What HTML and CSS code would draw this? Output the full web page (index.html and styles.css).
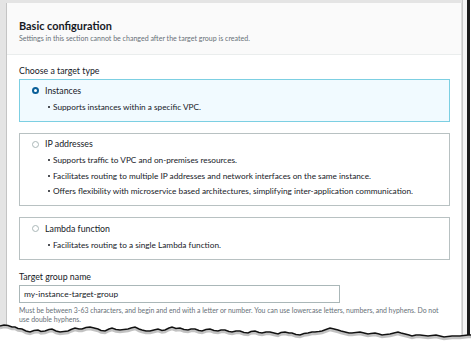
FILE: index.html
```html
<!DOCTYPE html>
<html>
<head>
<meta charset="utf-8">
<link rel="stylesheet" href="styles.css">
</head>
<body>
<div class="shot">
  <div class="card">
    <div class="header">
      <h2 class="title">Basic configuration</h2>
      <p class="subtitle">Settings in this section cannot be changed after the target group is created.</p>
    </div>
    <div class="body">
      <div class="field-label">Choose a target type</div>
      <div class="tiles">
        <div class="tile selected">
          <div class="tile-head"><span class="radio checked"></span><span>Instances</span></div>
          <ul class="bullets">
            <li>Supports instances within a specific VPC.</li>
          </ul>
        </div>
        <div class="tile">
          <div class="tile-head"><span class="radio"></span><span>IP addresses</span></div>
          <ul class="bullets">
            <li>Supports traffic to VPC and on-premises resources.</li>
            <li>Facilitates routing to multiple IP addresses and network interfaces on the same instance.</li>
            <li>Offers flexibility with microservice based architectures, simplifying inter-application communication.</li>
          </ul>
        </div>
        <div class="tile">
          <div class="tile-head"><span class="radio"></span><span>Lambda function</span></div>
          <ul class="bullets">
            <li>Facilitates routing to a single Lambda function.</li>
          </ul>
        </div>
      </div>
      <div class="field-label name-label">Target group name</div>
      <div class="input">my-instance-target-group</div>
      <p class="help">Must be between 3-63 characters, and begin and end with a letter or number. You can use lowercase letters, numbers, and hyphens. Do not use double hyphens.</p>
    </div>
  </div>
</div>
<svg class="tear" width="474" height="24" viewBox="0 0 474 24" xmlns="http://www.w3.org/2000/svg">
  <path d="M0 6 L4 5 L8 5.5 L12 7 L15 7 L18 8.5 L22 9 L26 11 L30 12 L34 10.5 L38 10 L41 11.5 L45 11 L49 9.5 L52 9 L56 11 L60 12 L64 11.5 L68 11 L71 9.5 L75 8 L79 9 L82 9 L86 7.5 L90 7 L94 8 L98 9 L101 10.5 L105 11 L109 9 L112 8 L116 9.5 L120 10 L124 9.5 L128 9 L131 8 L135 7 L139 9 L142 10 L146 11 L150 11 L154 10 L158 9 L162 10.5 L165 10 L169 8 L172 7 L176 8.5 L180 8 L184 9.5 L188 10 L191 9 L195 9 L199 10.5 L202 11 L206 9.5 L210 9 L214 10.5 L218 11 L221 10 L225 10 L229 11.5 L232 12 L236 11 L240 11 L244 12.5 L248 13 L251 11.5 L255 11 L259 12.5 L262 13 L266 12 L270 12 L274 13 L278 14 L281 12.5 L285 12 L289 13 L292 13 L296 14.5 L300 15 L304 13.5 L308 13 L312 12 L315 12 L319 11.5 L322 11 L326 9.5 L330 8 L334 9 L338 10 L341 11 L345 12 L349 13 L352 13 L356 12.5 L360 12 L364 13 L368 14 L371 13.5 L375 13 L379 14 L382 15 L386 14.5 L390 14 L394 13 L398 12 L401 13 L405 14 L409 15 L412 16 L416 15 L420 15 L424 15.5 L428 16 L432 15.5 L436 15 L440 16 L444 17 L448 16.5 L452 16 L456 16 L460 16 L464 15.5 L468 15 L471 15 L474 15 L474 24 L0 24 Z" fill="#fff"/>
  <path d="M0 8 L4 7 L8 7.5 L12 9 L15 9 L18 10.5 L22 11 L26 13 L30 14 L34 12.5 L38 12 L41 13.5 L45 13 L49 11.5 L52 11 L56 13 L60 14 L64 13.5 L68 13 L71 11.5 L75 10 L79 11 L82 11 L86 9.5 L90 9 L94 10 L98 11 L101 12.5 L105 13 L109 11 L112 10 L116 11.5 L120 12 L124 11.5 L128 11 L131 10 L135 9 L139 11 L142 12 L146 13 L150 13 L154 12 L158 11 L162 12.5 L165 12 L169 10 L172 9 L176 10.5 L180 10 L184 11.5 L188 12 L191 11 L195 11 L199 12.5 L202 13 L206 11.5 L210 11 L214 12.5 L218 13 L221 12 L225 12 L229 13.5 L232 14 L236 13 L240 13 L244 14.5 L248 15 L251 13.5 L255 13 L259 14.5 L262 15 L266 14 L270 14 L274 15 L278 16 L281 14.5 L285 14 L289 15 L292 15 L296 16.5 L300 17 L304 15.5 L308 15 L312 14 L315 14 L319 13.5 L322 13 L326 11.5 L330 10 L334 11 L338 12 L341 13 L345 14 L349 15 L352 15 L356 14.5 L360 14 L364 15 L368 16 L371 15.5 L375 15 L379 16 L382 17 L386 16.5 L390 16 L394 15 L398 14 L401 15 L405 16 L409 17 L412 18 L416 17 L420 17 L424 17.5 L428 18 L432 17.5 L436 17 L440 18 L444 19 L448 18.5 L452 18 L456 18 L460 18 L464 17.5 L468 17 L471 17" fill="none" stroke="#9a9a9a" stroke-width="2.5" stroke-opacity="0.6"/>
  <path d="M0 6 L4 5 L8 5.5 L12 7 L15 7 L18 8.5 L22 9 L26 11 L30 12 L34 10.5 L38 10 L41 11.5 L45 11 L49 9.5 L52 9 L56 11 L60 12 L64 11.5 L68 11 L71 9.5 L75 8 L79 9 L82 9 L86 7.5 L90 7 L94 8 L98 9 L101 10.5 L105 11 L109 9 L112 8 L116 9.5 L120 10 L124 9.5 L128 9 L131 8 L135 7 L139 9 L142 10 L146 11 L150 11 L154 10 L158 9 L162 10.5 L165 10 L169 8 L172 7 L176 8.5 L180 8 L184 9.5 L188 10 L191 9 L195 9 L199 10.5 L202 11 L206 9.5 L210 9 L214 10.5 L218 11 L221 10 L225 10 L229 11.5 L232 12 L236 11 L240 11 L244 12.5 L248 13 L251 11.5 L255 11 L259 12.5 L262 13 L266 12 L270 12 L274 13 L278 14 L281 12.5 L285 12 L289 13 L292 13 L296 14.5 L300 15 L304 13.5 L308 13 L312 12 L315 12 L319 11.5 L322 11 L326 9.5 L330 8 L334 9 L338 10 L341 11 L345 12 L349 13 L352 13 L356 12.5 L360 12 L364 13 L368 14 L371 13.5 L375 13 L379 14 L382 15 L386 14.5 L390 14 L394 13 L398 12 L401 13 L405 14 L409 15 L412 16 L416 15 L420 15 L424 15.5 L428 16 L432 15.5 L436 15 L440 16 L444 17 L448 16.5 L452 16 L456 16 L460 16 L464 15.5 L468 15 L471 15" fill="none" stroke="#111" stroke-width="1.6"/>
</svg>
</body>
</html>
```

FILE: styles.css
```css
html, body {
  margin: 0;
  padding: 0;
  background: #ffffff;
}

body {
  width: 474px;
  height: 344px;
  overflow: hidden;
  position: relative;
  font-family: "Lato", "Open Sans", sans-serif;
  color: #16191f;
}

.shot {
  width: 456px;
  height: 344px;
  padding: 3px 0 0 6px;
  background: #e4e4e4;
  box-shadow: 1px 0 0 #c9c9c9, 5px 0 0 #f4f4f4, 8px 0 0 #1a1a1a;
}

.card {
  height: 100%;
  background: #ffffff;
  border-left: 1px solid #c4c4c4;
  border-right: 1px solid #dcdcdc;
  box-sizing: border-box;
}

.header {
  background: #fafafa;
  border-bottom: 1px solid #eaeded;
  padding: 16px 12px 10px;
}

.title {
  margin: 0;
  font-size: 10.9px;
  line-height: 14px;
  font-weight: 700;
}

.subtitle {
  margin: 1px 0 0;
  font-size: 7.05px;
  line-height: 10px;
  color: #687078;
}

.body {
  padding: 10px 12px 0;
}

.field-label {
  font-size: 8.8px;
  line-height: 12px;
}

.tiles {
  margin-top: 2px;
  width: 431px;
  display: flex;
  flex-direction: column;
  gap: 11px;
}

.tile {
  border: 1px solid #b8c1c2;
  padding: 4.5px 9px 8px;
}

.tile.selected {
  border-color: #7ccfe2;
  background: #f1faff;
}

.tile-head {
  display: flex;
  align-items: center;
  gap: 6px;
  font-size: 8.8px;
  line-height: 12px;
}

.radio {
  width: 7px;
  height: 7px;
  border-radius: 50%;
  border: 1px solid #aab7b8;
  box-sizing: border-box;
  background: #fff;
  margin-left: 3px;
}

.radio.checked {
  border: 2.2px solid #0a5f99;
}

.bullets {
  margin: 4px 0 0;
  padding: 0 0 0 24px;
  list-style: none;
  display: flex;
  flex-direction: column;
  gap: 3.5px;
}

.bullets li {
  font-size: 8.25px;
  line-height: 12px;
  position: relative;
}

.bullets li::before {
  content: "";
  position: absolute;
  left: -5px;
  top: 5px;
  width: 2px;
  height: 2px;
  border-radius: 50%;
  background: #16191f;
}

.name-label {
  margin-top: 11px;
}

.input {
  margin-top: 2px;
  width: 321px;
  height: 18px;
  box-sizing: border-box;
  border: 1px solid #aab7b8;
  padding: 0 4px;
  font-size: 8.4px;
  line-height: 16px;
}

.help {
  margin: 3px 0 0;
  width: 428px;
  font-size: 6.9px;
  line-height: 9px;
  color: #687078;
}

.tear {
  position: absolute;
  left: 0;
  top: 320px;
  display: block;
}
```
